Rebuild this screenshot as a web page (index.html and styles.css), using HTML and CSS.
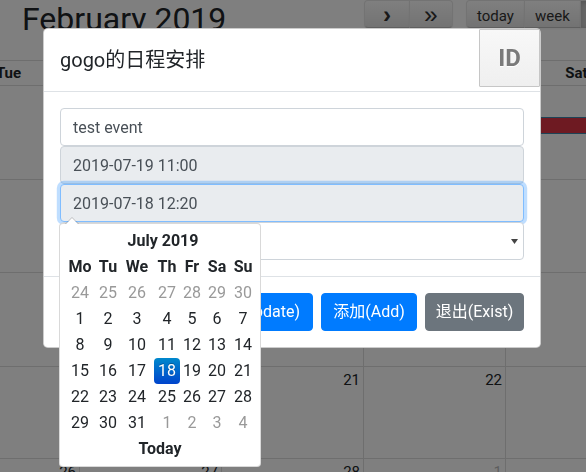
FILE: index.html
```html
<!DOCTYPE html>
<html lang="zh">
<head>
<meta charset="utf-8">
<title>gogo的日程安排</title>
<link rel="stylesheet" href="styles.css">
</head>
<body>
<div class="page">
  <div class="fc-toolbar">
    <h2 class="fc-title">February 2019</h2>
    <div class="fc-group">
      <button class="fc-btn fc-btn-next"><span class="fc-icon fc-icon-single">›</span></button>
      <button class="fc-btn fc-btn-nextyear"><span class="fc-icon fc-icon-double">»</span></button>
    </div>
    <div class="fc-group fc-group-views">
      <button class="fc-btn fc-btn-today">today</button>
      <button class="fc-btn fc-btn-week">week</button>
      <button class="fc-btn fc-btn-month fc-active">month</button>
    </div>
  </div>
  <div class="fc-grid">
    <div class="fc-head">Tue</div>
    <div class="fc-head">Wed</div>
    <div class="fc-head">Thu</div>
    <div class="fc-head">Fri</div>
    <div class="fc-head">Sat</div>

    <div class="fc-day fc-other"><div class="fc-num">29</div></div>
    <div class="fc-day fc-other"><div class="fc-num">30</div></div>
    <div class="fc-day fc-other"><div class="fc-num">31</div></div>
    <div class="fc-day"><div class="fc-num">1</div></div>
    <div class="fc-day"><div class="fc-num">2</div><div class="fc-event">11a</div></div>

    <div class="fc-day"><div class="fc-num">5</div></div>
    <div class="fc-day"><div class="fc-num">6</div></div>
    <div class="fc-day"><div class="fc-num">7</div></div>
    <div class="fc-day"><div class="fc-num">8</div></div>
    <div class="fc-day"><div class="fc-num">9</div></div>

    <div class="fc-day"><div class="fc-num">12</div></div>
    <div class="fc-day"><div class="fc-num">13</div></div>
    <div class="fc-day"><div class="fc-num">14</div></div>
    <div class="fc-day"><div class="fc-num">15</div></div>
    <div class="fc-day"><div class="fc-num">16</div></div>

    <div class="fc-day"><div class="fc-num">19</div></div>
    <div class="fc-day"><div class="fc-num">20</div></div>
    <div class="fc-day"><div class="fc-num">21</div></div>
    <div class="fc-day"><div class="fc-num">22</div></div>
    <div class="fc-day"><div class="fc-num">23</div></div>

    <div class="fc-day"><div class="fc-num">26</div></div>
    <div class="fc-day"><div class="fc-num">27</div></div>
    <div class="fc-day"><div class="fc-num">28</div></div>
    <div class="fc-day fc-other"><div class="fc-num">1</div></div>
    <div class="fc-day fc-other"><div class="fc-num">2</div></div>
  </div>
</div>

<div class="modal-backdrop"></div>

<div class="modal-dialog">
  <div class="modal-content">
    <div class="modal-header">
      <h5 class="modal-title">gogo的日程安排</h5>
      <button class="close-id" type="button">ID</button>
    </div>
    <div class="modal-body">
      <input class="form-control" type="text" value="test event">
      <input class="form-control" type="text" value="2019-07-19 11:00" readonly>
      <input class="form-control is-focus" type="text" value="2019-07-18 12:20" readonly>
      <div class="form-control form-select">
        <svg class="select-arrow" width="7" height="5" viewBox="0 0 7 5"><path d="M0 0H7L3.5 5Z" fill="#444"/></svg>
      </div>
    </div>
    <div class="modal-footer">
      <button class="btn btn-primary" type="button">修改(Update)</button>
      <button class="btn btn-primary btn-add" type="button">添加(Add)</button>
      <button class="btn btn-secondary btn-exit" type="button">退出(Exist)</button>
    </div>
  </div>
</div>

<div class="datepicker">
  <table class="dp-table">
    <colgroup>
      <col class="c-mo"><col class="c-tu"><col class="c-we"><col class="c-th"><col class="c-fr"><col class="c-sa"><col class="c-su">
    </colgroup>
    <thead>
      <tr><th class="dp-prev"></th><th class="dp-switch" colspan="5">July 2019</th><th class="dp-next"></th></tr>
      <tr><th>Mo</th><th>Tu</th><th>We</th><th>Th</th><th>Fr</th><th>Sa</th><th>Su</th></tr>
    </thead>
    <tbody>
      <tr><td class="old">24</td><td class="old">25</td><td class="old">26</td><td class="old">27</td><td class="old">28</td><td class="old">29</td><td class="old">30</td></tr>
      <tr><td>1</td><td>2</td><td>3</td><td>4</td><td>5</td><td>6</td><td>7</td></tr>
      <tr><td>8</td><td>9</td><td>10</td><td>11</td><td>12</td><td>13</td><td>14</td></tr>
      <tr><td>15</td><td>16</td><td>17</td><td class="active">18</td><td>19</td><td>20</td><td>21</td></tr>
      <tr><td>22</td><td>23</td><td>24</td><td>25</td><td>26</td><td>27</td><td>28</td></tr>
      <tr><td>29</td><td>30</td><td>31</td><td class="new">1</td><td class="new">2</td><td class="new">3</td><td class="new">4</td></tr>
    </tbody>
    <tfoot>
      <tr><th class="dp-today" colspan="7">Today</th></tr>
    </tfoot>
  </table>
</div>
</body>
</html>
```

FILE: styles.css
```css
* { box-sizing: border-box; }

html, body { margin: 0; padding: 0; }

body {
  position: relative;
  width: 586px;
  height: 472px;
  overflow: hidden;
  font-family: "Segoe UI", Roboto, "Noto Sans CJK SC", sans-serif;
  font-size: 16px;
  line-height: 1.5;
  color: #212529;
  background: #fff;
}

/* ---------- calendar page (under the backdrop) ---------- */
.page { font-size: 15px; }

.fc-toolbar {
  display: flex;
  align-items: flex-start;
  height: 60px;
}

.fc-title {
  flex: none;
  width: 342px;
  margin: 0 0 0 22px;
  font-size: 32px;
  font-weight: 400;
  line-height: 38px;
  white-space: nowrap;
}

.fc-group { display: flex; }
.fc-group-views { margin-left: 13px; }

.fc-btn {
  flex: none;
  height: 28px;
  margin: 0;
  padding: 3px 0 0;
  font-family: inherit;
  font-size: 15px;
  line-height: 24px;
  color: #333;
  text-align: center;
  background: linear-gradient(#ffffff, #e6e6e6);
  border: 1px solid;
  border-color: #e6e6e6 #e6e6e6 #bfbfbf;
  box-shadow: inset 0 1px 0 rgba(255,255,255,.2), 0 1px 2px rgba(0,0,0,.05);
}
.fc-btn + .fc-btn { margin-left: -1px; }
.fc-btn-next { width: 46px; border-radius: 4px 0 0 4px; }
.fc-btn-nextyear { width: 44px; border-radius: 0 4px 4px 0; }
.fc-btn-today { width: 59px; border-radius: 4px 0 0 4px; }
.fc-btn-week { width: 57px; }
.fc-btn-month { width: 70px; }
.fc-active {
  background: #cccccc;
  box-shadow: inset 0 2px 4px rgba(0,0,0,.15), 0 1px 2px rgba(0,0,0,.05);
}

.fc-icon {
  display: inline-block;
  padding-top: 3px;
  font-family: "Liberation Mono", "DejaVu Sans Mono", monospace;
  line-height: 20px;
}
.fc-icon-single { font-size: 24px; font-weight: 700; }
.fc-icon-double { font-size: 24px; }

.fc-grid {
  display: grid;
  grid-template-columns: repeat(5, 142px);
  grid-template-rows: 25px 94px 93px 94px 92px 94px;
  margin-left: -62px;
  width: 710px;
  border-top: 1px solid #ddd;
}

.fc-head,
.fc-day {
  border-right: 1px solid #ddd;
  border-bottom: 1px solid #ddd;
}

.fc-head {
  font-weight: 700;
  text-align: center;
  line-height: 24px;
}

.fc-num {
  padding: 2px 3px;
  line-height: 22px;
  text-align: right;
}
.fc-other .fc-num { opacity: .3; }

.fc-event {
  height: 17px;
  margin: 5px 2px 0;
  padding: 0 2px;
  font-size: 12.75px;
  line-height: 15px;
  color: #fff;
  background: #dc3545;
  border: 1px solid #3a87ad;
  border-radius: 3px;
}

/* ---------- modal ---------- */
.modal-backdrop {
  position: fixed;
  inset: 0;
  z-index: 10;
  background: rgba(0,0,0,.5);
}

.modal-dialog {
  position: absolute;
  left: 43px;
  top: 28px;
  z-index: 20;
  width: 498px;
}

.modal-content {
  display: flex;
  flex-direction: column;
  background: #fff;
  border: 1px solid rgba(0,0,0,.2);
  border-radius: 4.8px;
}

.modal-header {
  display: flex;
  align-items: flex-start;
  justify-content: space-between;
  padding: 16px;
  border-bottom: 1px solid #dee2e6;
}

.modal-title {
  margin: 0;
  font-size: 20px;
  font-weight: 400;
  line-height: 30px;
}

.close-id {
  width: 61px;
  height: 58px;
  margin: -16px -16px -16px auto;
  padding: 0;
  font-family: inherit;
  font-size: 24px;
  font-weight: 700;
  line-height: 24px;
  color: #7a7a7a;
  text-shadow: 0 1px 0 #fff;
  background: linear-gradient(#f8f8f8, #efefef);
  border: 1px solid #c6c6c6;
  border-radius: 1px;
}

.modal-body {
  padding: 16px;
}

.form-control {
  display: block;
  width: 100%;
  height: 38px;
  margin: 0;
  padding: 6px 12px;
  font-family: inherit;
  font-size: 16px;
  line-height: 24px;
  color: #495057;
  background: #fff;
  border: 1px solid #ced4da;
  border-radius: 4px;
  outline: 0;
}
.form-control[readonly] { background: #e9ecef; }
.form-control.is-focus {
  border-color: #80bdff;
  box-shadow: 0 0 0 3.2px rgba(0,123,255,.25);
}

.form-select {
  display: flex;
  align-items: center;
  justify-content: flex-end;
  padding: 0 5px 0 12px;
}
.select-arrow { display: block; }

.modal-footer {
  display: flex;
  align-items: center;
  justify-content: flex-end;
  padding: 12px;
  border-top: 1px solid #dee2e6;
}

.btn {
  margin: 4px;
  padding: 6px 12px;
  font-family: inherit;
  font-size: 16px;
  line-height: 24px;
  color: #fff;
  text-align: center;
  white-space: nowrap;
  border: 1px solid transparent;
  border-radius: 4px;
}
.btn-add { width: 96px; padding: 6px 0; }
.btn-exit { width: 99px; padding: 6px 0; }
.btn-primary { background: #007bff; border-color: #007bff; }
.btn-secondary { background: #6c757d; border-color: #6c757d; }

/* ---------- datetime picker ---------- */
.datepicker {
  position: absolute;
  left: 59px;
  top: 223px;
  z-index: 30;
  width: 202px;
  padding: 4px;
  font-size: 16px;
  color: #212529;
  background: #fff;
  border: 1px solid rgba(0,0,0,.15);
  border-radius: 4px;
}
.datepicker::before {
  content: "";
  position: absolute;
  top: -7px;
  left: 5px;
  border-left: 7px solid transparent;
  border-right: 7px solid transparent;
  border-bottom: 7px solid rgba(0,0,0,.2);
}
.datepicker::after {
  content: "";
  position: absolute;
  top: -6px;
  left: 6px;
  border-left: 6px solid transparent;
  border-right: 6px solid transparent;
  border-bottom: 6px solid #fff;
}

.dp-table {
  width: 192px;
  table-layout: fixed;
  border-collapse: separate;
  border-spacing: 0;
}
.c-mo { width: 32px; }
.c-tu { width: 24px; }
.c-we { width: 34px; }
.c-th { width: 26px; }
.c-fr { width: 24px; }
.c-sa { width: 26px; }
.c-su { width: 26px; }

.dp-table th,
.dp-table td {
  padding: 1px 0;
  line-height: 24px;
  text-align: center;
  white-space: nowrap;
  border-radius: 4px;
}
.dp-table th { font-weight: 700; }
.dp-table td.old,
.dp-table td.new { color: #999; }
.dp-table td.active {
  color: #fff;
  text-shadow: 0 -1px 0 rgba(0,0,0,.25);
  background: linear-gradient(#0088cc, #0044cc);
}
```
